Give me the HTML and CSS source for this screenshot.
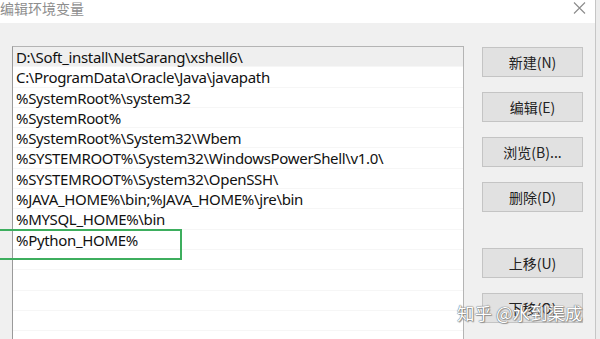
FILE: index.html
```html
<!DOCTYPE html>
<html>
<head>
    <title>编辑环境变量</title>
    <link rel="stylesheet" href="styles.css">
</head>
<body>
    <div class="window">
        <div class="titlebar">
            <span class="title">编辑环境变量</span>
            <svg class="close" width="13" height="12" viewBox="0 0 13 12">
                <path d="M1 0.5 L12 11.5 M12 0.5 L1 11.5" stroke="#8c8c8c" stroke-width="1.1" fill="none"/>
            </svg>
        </div>
        <div class="content">
            <div class="list">
                <div class="row selected">D:\Soft_install\NetSarang\xshell6\</div>
                <div class="row">C:\ProgramData\Oracle\Java\javapath</div>
                <div class="row">%SystemRoot%\system32</div>
                <div class="row">%SystemRoot%</div>
                <div class="row">%SystemRoot%\System32\Wbem</div>
                <div class="row">%SYSTEMROOT%\System32\WindowsPowerShell\v1.0\</div>
                <div class="row">%SYSTEMROOT%\System32\OpenSSH\</div>
                <div class="row">%JAVA_HOME%\bin;%JAVA_HOME%\jre\bin</div>
                <div class="row">%MYSQL_HOME%\bin</div>
                <div class="row">%Python_HOME%</div>
                <div class="row"></div>
                <div class="row"></div>
                <div class="row"></div>
                <div class="row"></div>
                <div class="row"></div>
            </div>
            <div class="buttons">
                <button class="btn">新建(N)</button>
                <button class="btn">编辑(E)</button>
                <button class="btn">浏览(B)...</button>
                <button class="btn">删除(D)</button>
                <button class="btn move">上移(U)</button>
                <button class="btn">下移(O)</button>
            </div>
        </div>
    </div>
    <div class="highlight"></div>
    <div class="watermark">知乎 @水到渠成</div>
</body>
</html>
```

FILE: styles.css
```css
body {
    margin: 0;
    width: 600px;
    height: 339px;
    overflow: hidden;
    background-color: #ececec;
    font-family: "Noto Sans", "Noto Sans CJK SC", sans-serif;
    position: relative;
}

.window {
    width: 595px;
    height: 339px;
    border-right: 1px solid #c6c6c6;
    background-color: #f0f0f0;
    overflow: hidden;
}

.titlebar {
    height: 23px;
    background-color: #fff;
    display: flex;
    justify-content: space-between;
    align-items: flex-start;
}

.title {
    font-family: "Noto Sans CJK SC", sans-serif;
    font-size: 14px;
    line-height: 17px;
    color: #8e8e8e;
}

.close {
    margin-top: 2px;
    margin-right: 9px;
}

.content {
    display: flex;
    padding-left: 12px;
    padding-top: 23px;
}

.list {
    width: 450px;
    height: 300px;
    border-top: 1px solid #b4b4b4;
    border-left: 1px solid #9a9a9a;
    border-right: 1px solid #b4b4b4;
    background-color: #fff;
    overflow: hidden;
}

.row {
    height: 20.3px;
    box-sizing: border-box;
    border-bottom: 1px solid #f6f6f6;
    padding-left: 3px;
    font-size: 15px;
    line-height: 20px;
    letter-spacing: -0.33px;
    color: #111;
    white-space: nowrap;
}

.row.selected {
    background-color: #efefef;
}

.buttons {
    display: flex;
    flex-direction: column;
    gap: 15px;
    margin-left: 18px;
    padding-top: 1px;
}

.btn {
    width: 101px;
    height: 30px;
    background-color: #e1e1e1;
    border: 1px solid #c4c4c4;
    font-family: "Noto Sans CJK SC", sans-serif;
    font-size: 14px;
    color: #222;
    padding: 0;
}

.btn.move {
    margin-top: 21px;
}

.highlight {
    position: absolute;
    left: -2px;
    top: 229px;
    width: 180px;
    height: 27px;
    border: 2px solid #3dae5e;
}

.watermark {
    position: absolute;
    left: 457px;
    top: 301px;
    font-family: "Noto Sans CJK SC", sans-serif;
    font-size: 17.5px;
    line-height: 24px;
    color: #fff;
    text-shadow: 0 0 1px #666, 0 0 1px #666, 1px 1px 1px #999;
}
```
